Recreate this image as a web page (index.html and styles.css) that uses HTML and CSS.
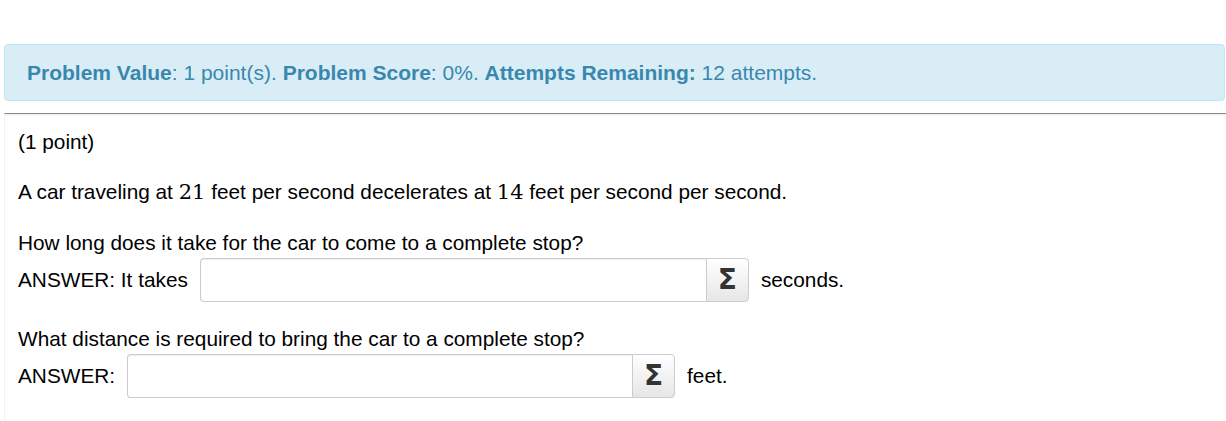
FILE: index.html
```html
<!DOCTYPE html>
<html>
<head>
<meta charset="utf-8">
<link rel="stylesheet" href="styles.css">
</head>
<body>
<div class="alert">
  <b>Problem Value</b>: 1 point(s). <b>Problem Score</b>: 0%. <b>Attempts Remaining:</b> 12 attempts.
</div>
<div class="problem">
  <p class="pts">(1 point)</p>
  <p class="stmt">A car traveling at <span class="m">21</span> feet per second decelerates at <span class="m">14</span> feet per second per second.</p>
  <p class="q">How long does it take for the car to come to a complete stop?</p>
  <div class="ans">
    <span>ANSWER: It takes</span>
    <div class="ig ig1"><input type="text" class="inp"><button class="btn" type="button">Σ</button></div>
    <span>seconds.</span>
  </div>
  <p class="q q2">What distance is required to bring the car to a complete stop?</p>
  <div class="ans">
    <span>ANSWER:</span>
    <div class="ig ig2"><input type="text" class="inp"><button class="btn" type="button">Σ</button></div>
    <span>feet.</span>
  </div>
</div>
</body>
</html>
```
FILE: styles.css
```css
html, body {
  margin: 0;
  padding: 0;
  background: #fff;
}
body {
  font-family: "Liberation Sans", Arial, sans-serif;
  font-size: 20.8px;
  color: #000;
}
.alert {
  margin: 44px 1px 0 4px;
  height: 57px;
  box-sizing: border-box;
  border: 1px solid #bce8f1;
  background: #d9edf7;
  border-radius: 4px;
  color: #3a87ad;
  padding: 17px 0 0 22px;
  line-height: 22px;
  font-size: 21px;
}
.alert b {
  font-weight: bold;
}
.problem {
  margin: 12px 0 0 4px;
  border-top: 1px solid #8a8a8a;
  border-left: 1px solid #f3f3f3;
  box-shadow: inset 0 2px 2px -1px #eaeaea;
  padding: 16px 0 20px 13px;
  height: 320px;
  box-sizing: border-box;
}
.problem p {
  margin: 0;
  line-height: 24px;
}
.stmt {
  margin-top: 26px !important;
}
.m {
  font-family: "DejaVu Serif", "Liberation Serif", serif;
  font-size: 21px;
}
.q {
  margin-top: 27px !important;
}
.q2 {
  margin-top: 25px !important;
}
.ans {
  display: flex;
  align-items: center;
  margin-top: 3px;
  line-height: 24px;
}
.ig {
  display: flex;
  height: 44px;
  margin: 0 12px 0 12px;
}
.ig1 { width: 549px; }
.ig2 { width: 548px; }
.inp {
  flex: 1;
  min-width: 0;
  box-sizing: border-box;
  height: 44px;
  border: 1px solid #cccccc;
  border-right: none;
  border-radius: 4px 0 0 4px;
  box-shadow: inset 0 1px 1px rgba(0,0,0,0.075);
  margin: 0;
  padding: 0 8px;
  font-size: 18px;
  background: #fff;
  outline: none;
}
.btn {
  width: 43px;
  height: 44px;
  box-sizing: border-box;
  margin: 0;
  padding: 0;
  border: 1px solid #cccccc;
  border-radius: 0 4px 4px 0;
  background: linear-gradient(#ffffff, #e6e6e6);
  color: #333;
  font-family: "DejaVu Sans", sans-serif;
  font-weight: bold;
  font-size: 28px;
  line-height: 42px;
}
```
